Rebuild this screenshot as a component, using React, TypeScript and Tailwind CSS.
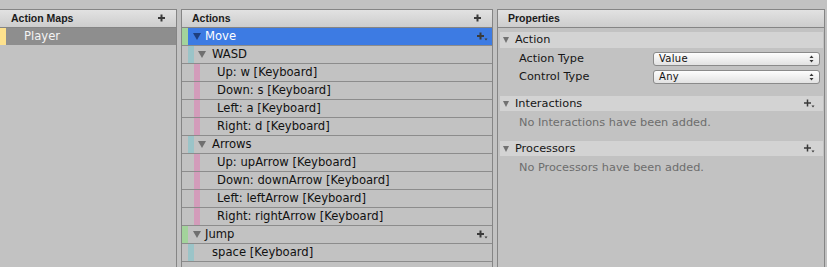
import React from "react";

type Row = {
  kind: "action" | "composite" | "binding";
  depth: number;
  label: string;
  selected?: boolean;
};

const rows: Row[] = [
  { kind: "action", depth: 0, label: "Move", selected: true },
  { kind: "composite", depth: 1, label: "WASD" },
  { kind: "binding", depth: 2, label: "Up: w [Keyboard]" },
  { kind: "binding", depth: 2, label: "Down: s [Keyboard]" },
  { kind: "binding", depth: 2, label: "Left: a [Keyboard]" },
  { kind: "binding", depth: 2, label: "Right: d [Keyboard]" },
  { kind: "composite", depth: 1, label: "Arrows" },
  { kind: "binding", depth: 2, label: "Up: upArrow [Keyboard]" },
  { kind: "binding", depth: 2, label: "Down: downArrow [Keyboard]" },
  { kind: "binding", depth: 2, label: "Left: leftArrow [Keyboard]" },
  { kind: "binding", depth: 2, label: "Right: rightArrow [Keyboard]" },
  { kind: "action", depth: 0, label: "Jump" },
  { kind: "binding", depth: 1, label: "space [Keyboard]" },
];

function Tri({ color = "#707070", w = 8, h = 7 }: { color?: string; w?: number; h?: number }) {
  return (
    <svg width={w} height={h} viewBox={`0 0 ${w} ${h}`} className="shrink-0">
      <path d={`M0 0H${w}L${w / 2} ${h}Z`} fill={color} />
    </svg>
  );
}

function Plus({ arrow = false, thin = false }: { arrow?: boolean; thin?: boolean }) {
  const t = thin ? 1.5 : 2;
  return (
    <svg width="11" height="9" viewBox="0 0 11 9" className="shrink-0">
      <rect x="0" y={3.5 - t / 2 + 0.5} width="7" height={t} fill="#3a3a3a" />
      <rect x={3.5 - t / 2} y="0.5" width={t} height="7" fill="#3a3a3a" />
      {arrow && <path d="M7.5 6.5H10.5L9 8.5Z" fill="#3a3a3a" />}
    </svg>
  );
}

function UpDown() {
  return (
    <svg width="5" height="8" viewBox="0 0 5 8" className="shrink-0">
      <path d="M0.5 3H4.5L2.5 0.5Z" fill="#333" />
      <path d="M0.5 5H4.5L2.5 7.5Z" fill="#333" />
    </svg>
  );
}

function PanelHeader({ title, plus, pl = "pl-[10px]" }: { title: string; plus?: boolean; pl?: string }) {
  return (
    <div
      className={`h-[18px] shrink-0 border-b border-[#858585] bg-gradient-to-b from-[#e2e2e2] to-[#cdcdcd] flex items-center justify-between ${pl} pr-[7px]`}
    >
      <span className="font-['Liberation_Sans',sans-serif] font-bold text-[10.5px] text-[#1b1b1b]">{title}</span>
      {plus && <Plus />}
    </div>
  );
}

function ActionRow({ row }: { row: Row }) {
  const strip =
    row.kind === "action" ? "bg-[#a3d39b]" : row.depth === 2 ? "bg-[#d39cba]" : "bg-[#9bc4c8]";
  const indent = row.depth === 0 ? "w-0" : row.depth === 1 ? "w-[6px]" : "w-[12px]";
  return (
    <div
      className={`h-[18px] shrink-0 border-b border-[#8c8c8c] flex items-stretch ${
        row.selected ? "bg-[#3d7be3] text-white" : "text-[#111]"
      }`}
    >
      <div className={`${indent} shrink-0`} />
      <div className={`w-[6px] shrink-0 ${strip}`} />
      {row.kind === "action" && (
        <div className="flex items-center flex-1 pl-[5px] pr-[4px]">
          <Tri color={row.selected ? "#1e3f7e" : "#6f6f6f"} />
          <span className="ml-[4px]">{row.label}</span>
          <span className="flex-1" />
          <Plus arrow />
        </div>
      )}
      {row.kind === "composite" && (
        <div className="flex items-center flex-1 pl-[4px]">
          <Tri />
          <span className="ml-[6px]">{row.label}</span>
        </div>
      )}
      {row.kind === "binding" && (
        <div className={`flex items-center flex-1 ${row.depth === 2 ? "pl-[17px]" : "pl-[18px]"}`}>
          <span>{row.label}</span>
        </div>
      )}
    </div>
  );
}

function SectionHeader({ title, plus, h = "h-[15px]" }: { title: string; plus?: boolean; h?: string }) {
  return (
    <div className={`${h} bg-[#d3d3d3] flex items-center pl-[3px] pr-[8px]`}>
      <Tri w={6} h={6} color="#727272" />
      <span className="ml-[6px] text-[#161616]">{title}</span>
      <span className="flex-1" />
      {plus && <Plus arrow thin />}
    </div>
  );
}

function Field({ label, value }: { label: string; value: string }) {
  return (
    <div className="h-[18px] flex items-center pl-[19px] pr-[3px]">
      <span className="flex-1 text-[#161616]">{label}</span>
      <div className="w-[167px] h-[14px] rounded-[3px] border border-[#8a8a8a] bg-gradient-to-b from-[#fdfdfd] to-[#e2e2e2] flex items-center pl-[5px] pr-[5px]">
        <span className="flex-1 text-[10px] tracking-[0.3px] text-[#111] leading-none">{value}</span>
        <UpDown />
      </div>
    </div>
  );
}

export default function App() {
  return (
    <div className="w-[827px] h-[267px] overflow-hidden bg-[#c2c2c2] pt-[9px] flex gap-[4px] font-['DejaVu_Sans',sans-serif] text-[11.6px] leading-none">
      {/* action maps */}
      <section className="w-[177px] shrink-0 border-t border-r border-[#858585] flex flex-col">
        <PanelHeader title="Action Maps" plus pl="pl-[11px]" />
        <div className="h-[17px] flex items-stretch bg-[#8e8e8e]">
          <div className="w-[6px] bg-[#fde18d]" />
          <span className="ml-[18px] self-center text-[#f4f4f4]">Player</span>
        </div>
      </section>

      {/* actions */}
      <section className="w-[312px] shrink-0 border-t border-x border-[#858585] flex flex-col">
        <PanelHeader title="Actions" plus />
        {rows.map((r, i) => (
          <ActionRow key={i} row={r} />
        ))}
      </section>

      {/* properties */}
      <section className="w-[328px] shrink-0 border-t border-x border-[#858585] flex flex-col text-[11.3px]">
        <PanelHeader title="Properties" />
        <div className="pl-[2px] pr-[1px] pt-[4px] flex flex-col">
          <SectionHeader title="Action" h="h-[16px]" />
          <div className="h-[2px]" />
          <Field label="Action Type" value="Value" />
          <Field label="Control Type" value="Any" />
          <div className="h-[10px]" />
          <SectionHeader title="Interactions" plus />
          <div className="h-[17px] mt-[3px] flex items-center pl-[19px] text-[#6d6d6d]">
            No Interactions have been added.
          </div>
          <div className="h-[10px]" />
          <SectionHeader title="Processors" plus />
          <div className="h-[17px] mt-[3px] flex items-center pl-[19px] text-[#6d6d6d]">
            No Processors have been added.
          </div>
        </div>
      </section>
    </div>
  );
}
